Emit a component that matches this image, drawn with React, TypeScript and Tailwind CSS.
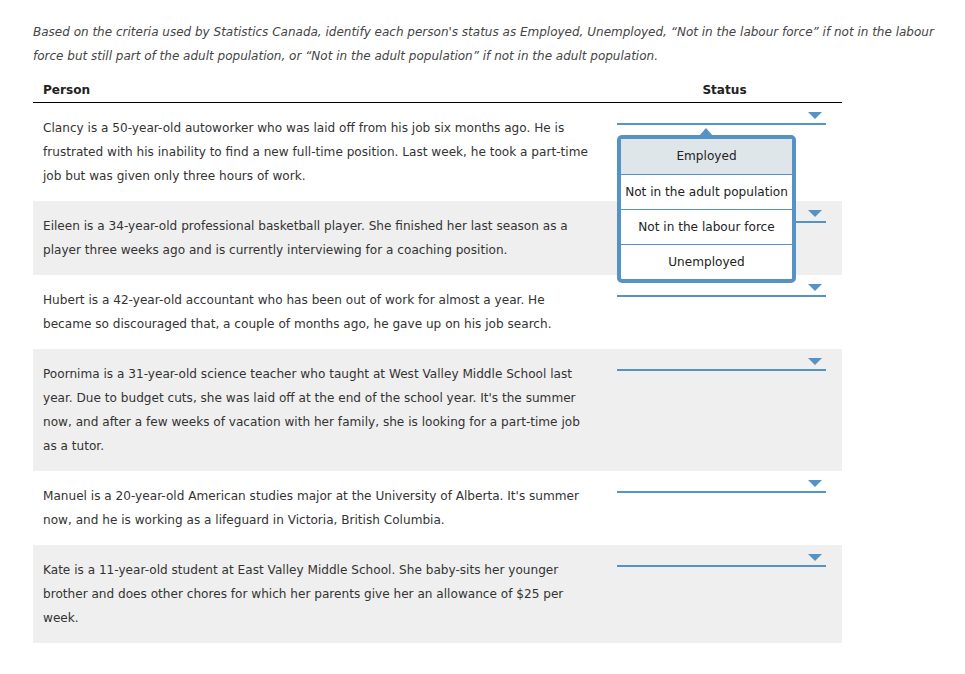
import React from 'react';

interface Row {
  id: number;
  text: string;
}

const rows: Row[] = [
  {
    id: 1,
    text: 'Clancy is a 50-year-old autoworker who was laid off from his job six months ago. He is frustrated with his inability to find a new full-time position. Last week, he took a part-time job but was given only three hours of work.',
  },
  {
    id: 2,
    text: 'Eileen is a 34-year-old professional basketball player. She finished her last season as a player three weeks ago and is currently interviewing for a coaching position.',
  },
  {
    id: 3,
    text: 'Hubert is a 42-year-old accountant who has been out of work for almost a year. He became so discouraged that, a couple of months ago, he gave up on his job search.',
  },
  {
    id: 4,
    text: "Poornima is a 31-year-old science teacher who taught at West Valley Middle School last year. Due to budget cuts, she was laid off at the end of the school year. It's the summer now, and after a few weeks of vacation with her family, she is looking for a part-time job as a tutor.",
  },
  {
    id: 5,
    text: "Manuel is a 20-year-old American studies major at the University of Alberta. It's summer now, and he is working as a lifeguard in Victoria, British Columbia.",
  },
  {
    id: 6,
    text: 'Kate is a 11-year-old student at East Valley Middle School. She baby-sits her younger brother and does other chores for which her parents give her an allowance of $25 per week.',
  },
];

const options = ['Employed', 'Not in the adult population', 'Not in the labour force', 'Unemployed'];

const Caret: React.FC = () => (
  <svg width="14" height="7" viewBox="0 0 14 7" className="absolute right-[4px] top-[9px]">
    <path d="M0 0 H14 L7 7 Z" fill="#5592c6" />
  </svg>
);

const StatusSelect: React.FC<{ open?: boolean }> = ({ open }) => (
  <div className="relative h-[22px] border-b-2 border-[#5592c6]">
    <Caret />
    {open && (
      <div className="absolute left-0 top-[32px] z-10 w-[179px]">
        <svg width="14" height="8" viewBox="0 0 14 8" className="absolute left-[82px] top-[-7px]">
          <path d="M0 8 L7 0 L14 8 Z" fill="#5592c6" />
        </svg>
        <div className="rounded-[5px] border-4 border-[#5592c6] bg-white overflow-hidden">
          {options.map((opt, i) => (
            <div
              key={opt}
              className={`h-[35px] flex items-center justify-center whitespace-nowrap text-[12.1px] text-[#222] ${
                i === 0 ? 'bg-[#dfe6e9]' : 'border-t border-[#5592c6]'
              }`}
            >
              {opt}
            </div>
          ))}
        </div>
      </div>
    )}
  </div>
);

const App: React.FC = () => {
  return (
    <div className="min-h-[674px] bg-white pl-[33px] pt-[20px] text-[#333] font-['DejaVu_Sans',Verdana,sans-serif]">
      <p className="w-[910px] text-[12px] italic leading-[24px] text-[#444]">
        Based on the criteria used by Statistics Canada, identify each person's status as Employed, Unemployed, “Not in
        the labour force” if not in the labour force but still part of the adult population, or “Not in the adult
        population” if not in the adult population.
      </p>

      <div className="mt-[11px] w-[809px]">
        <div className="flex border-b border-black text-[12.1px] font-bold leading-[23px] text-[#222]">
          <div className="w-[574px] pl-[10px]">Person</div>
          <div className="flex-1 text-center">Status</div>
        </div>

        {rows.map((row, i) => (
          <div key={row.id} className={`flex ${i % 2 === 1 ? 'bg-[#efefef]' : 'bg-white'}`}>
            <div className="w-[574px] pl-[10px] pr-[12px] pt-[13px] pb-[13px] text-[12.1px] leading-[24px]">
              {row.text}
            </div>
            <div className="flex-1 pl-[10px] pr-[16px]">
              <StatusSelect open={i === 0} />
            </div>
          </div>
        ))}
      </div>
    </div>
  );
};

export default App;
